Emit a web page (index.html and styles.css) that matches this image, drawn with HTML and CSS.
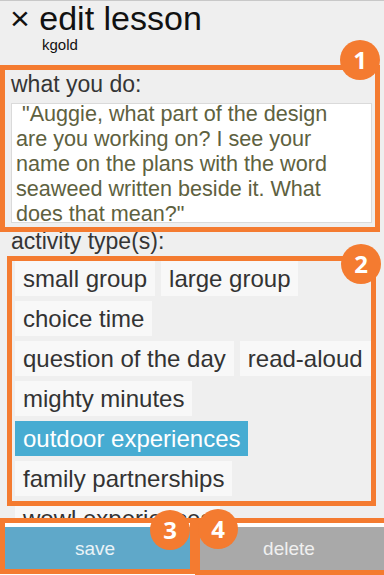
FILE: index.html
```html
<!DOCTYPE html>
<html lang="en">
<head>
    <meta charset="UTF-8">
    <meta name="viewport" content="width=device-width, initial-scale=1.0">
    <title>edit lesson</title>
    <link rel="stylesheet" href="styles.css">
</head>
<body>
    <div class="app">
        <header class="top">
            <h1><span class="close">&times;</span> edit lesson</h1>
            <div class="user">kgold</div>
        </header>

        <main class="form">
            <div class="field-label">what you do:</div>
            <div class="textbox">
                <p>&nbsp;"Auggie, what part of the design<br>are you working on? I see your<br>name on the plans with the word<br>seaweed written beside it. What<br>does that mean?"</p>
            </div>

            <div class="field-label types">activity type(s):</div>
            <div class="chips">
                <span class="chip">small group</span>
                <span class="chip">large group</span>
                <span class="chip">choice time</span>
                <span class="chip">question of the day</span>
                <span class="chip">read-aloud</span>
                <span class="chip">mighty minutes</span>
                <span class="chip selected">outdoor experiences</span>
                <span class="chip">family partnerships</span>
                <span class="chip">wowl experiences</span>
            </div>
        </main>

        <footer class="actions">
            <button class="btn save">save</button>
            <button class="btn delete">delete</button>
        </footer>

        <!-- annotation layer drawn over the screen -->
        <div class="notes">
            <div class="frame frame-1"></div>
            <div class="frame frame-2"></div>
            <div class="frame frame-3"></div>
            <div class="frame frame-4"></div>
            <span class="badge badge-1">1</span>
            <span class="badge badge-2">2</span>
            <span class="badge badge-3">3</span>
            <span class="badge badge-4">4</span>
        </div>
    </div>
</body>
</html>
```

FILE: styles.css
```css
* {
    margin: 0;
    padding: 0;
    box-sizing: border-box;
}

body {
    font-family: "Liberation Sans", Arial, sans-serif;
    background-color: #efefef;
}

.app {
    position: relative;
    width: 384px;
    height: 575px;
    overflow: hidden;
    display: flex;
    flex-direction: column;
    border-top: 1px solid #c8c8c8;
}

.top {
    flex: none;
    padding-left: 10px;
    color: #111;
}

.top h1 {
    font-size: 34px;
    line-height: 34px;
    font-weight: normal;
}

.user {
    margin-top: 2px;
    padding-left: 32px;
    font-size: 15px;
    line-height: 16px;
}

.form {
    flex: 1;
    min-height: 0;
    overflow: hidden;
    padding: 0 12px 0 11px;
}

.field-label {
    margin-top: 18px;
    font-size: 23px;
    line-height: 26px;
    color: #353535;
}

.field-label.types {
    margin-top: 5px;
}

.textbox {
    margin-top: 6px;
    height: 120px;
    background-color: #fff;
    border: 1px solid #dadada;
    padding: 0 4px;
    overflow: hidden;
}

.textbox p {
    margin-top: -3px;
    font-size: 21.6px;
    line-height: 25px;
    color: #5e6140;
    white-space: nowrap;
}

.chips {
    display: flex;
    flex-wrap: wrap;
    gap: 5px 6px;
    margin-top: 7px;
    margin-right: -3px;
    padding-left: 4px;
}

.chip {
    display: block;
    height: 35px;
    padding: 0 8px;
    font-size: 24px;
    line-height: 35px;
    color: #333;
    background-color: #f8f8f8;
}

.chip.selected {
    background-color: #47acd2;
    color: #fff;
}

.actions {
    flex: none;
    height: 53px;
    display: flex;
    gap: 4px;
    padding: 5px 0 4px;
    background-color: #fff;
}

.btn {
    flex: 1;
    border: none;
    font-family: inherit;
    font-size: 19px;
    cursor: pointer;
}

.btn.save {
    background-color: #5fa8c9;
    color: #eaf3f7;
}

.btn.delete {
    background-color: #a9a9a9;
    color: #f0f0f0;
}

/* annotations */
.notes {
    position: absolute;
    inset: 0;
    pointer-events: none;
}

.frame {
    position: absolute;
    border: 5px solid #f47b30;
}

.frame-1 { left: 0; top: 64px; width: 380px; height: 167px; }
.frame-2 { left: 7px; top: 255px; width: 369px; height: 250px; }
.frame-3 { left: 0; top: 517px; width: 195px; height: 56px; }
.frame-4 { left: 195px; top: 517px; width: 195px; height: 57px; }

.badge {
    position: absolute;
    width: 40px;
    height: 40px;
    border-radius: 50%;
    background-color: #f47b30;
    color: #fff;
    font-family: "Open Sans", sans-serif;
    font-weight: 700;
    font-size: 24px;
    line-height: 40px;
    text-align: center;
}

.badge-1 { left: 340px; top: 39px; }
.badge-2 { left: 341px; top: 243px; }
.badge-3 { left: 150px; top: 509px; }
.badge-4 { left: 198px; top: 508px; }
```
